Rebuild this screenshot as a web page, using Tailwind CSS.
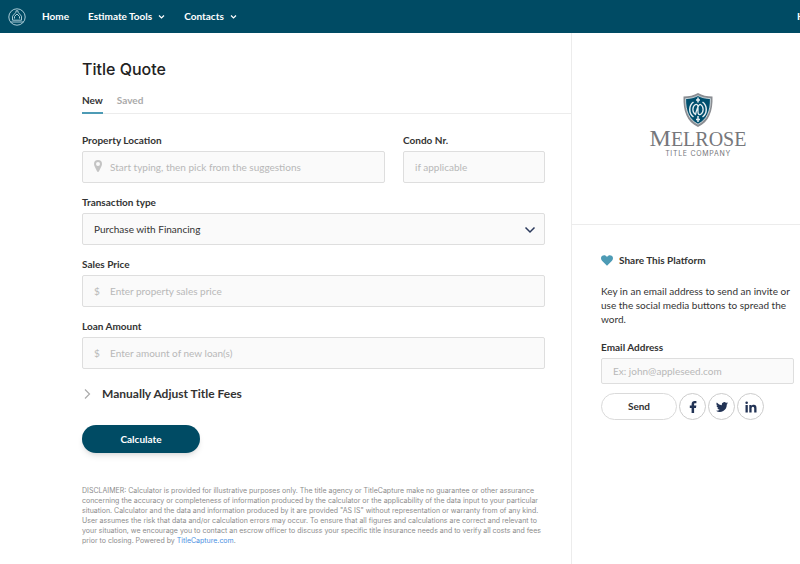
<!DOCTYPE html>
<html lang="en">
<head>
  <meta charset="UTF-8" />
  <meta name="viewport" content="width=device-width, initial-scale=1.0"/>
  <title>Title Quote</title>
  <script src="https://cdn.jsdelivr.net/npm/@tailwindcss/browser@4"></script>
</head>
<body class="flex flex-col min-h-screen overflow-x-hidden bg-white text-[#333] text-[10px] font-['Lato',sans-serif]">
  <header class="flex items-center h-[33px] pl-2 bg-[#004b64] text-white font-bold overflow-hidden">
    <a href="#" aria-label="Dashboard" class="mr-4">
      <svg class="w-[18px] h-[18px]" viewBox="0 0 18 18" fill="none" stroke="#a9cbd6" stroke-width="1">
        <circle cx="9" cy="9" r="8.2"/>
        <path d="M2.500 14h13M4.500 12.200V8.200L8 4.200V2.800h2v1.400l3.500 4v4h-9M6.500 10.500V8.500L9 6l2.500 2.500v2"/>
      </svg>
    </a>
    <nav class="flex items-center flex-1 gap-[19px]">
      <a href="#">Home</a>
      <a href="#" class="flex items-center gap-[6px]">Estimate Tools
        <svg class="w-[7px] h-[7px]" viewBox="0 0 7 7" fill="none" stroke="currentColor" stroke-width="1.2"><path d="M1 2.500l2.500 2.500L6 2.500"/></svg>
      </a>
      <a href="#" class="flex items-center gap-[6px]">Contacts
        <svg class="w-[7px] h-[7px]" viewBox="0 0 7 7" fill="none" stroke="currentColor" stroke-width="1.2"><path d="M1 2.500l2.500 2.500L6 2.500"/></svg>
      </a>
    </nav>
    <a href="#" class="w-[3px]">H</a>
  </header>

  <div class="flex flex-1">
    <main class="flex-1 pl-[82px]">
      <h1 class="mt-6 text-[16px] leading-6 font-medium font-['Inter',sans-serif] text-[#222]">Title Quote</h1>

      <div class="flex gap-[14px] mt-2 h-[25px] border-b border-[#ececec] font-bold">
        <a href="#" class="h-[25px] pt-[3px] leading-4 border-b-2 border-[#4d9bb5]">New</a>
        <a href="#" class="pt-[3px] leading-4 text-[#aaa]">Saved</a>
      </div>

      <form class="pr-[26px] mt-5">
        <div class="flex gap-[18px] mb-[13px]">
          <div class="flex-1">
            <label for="location" class="block mb-[5px] leading-3 font-bold">Property Location</label>
            <div class="flex items-center h-8 pl-[11px] border border-[#dedede] rounded-xs bg-[#fafafa]">
              <svg class="w-2 h-3 mr-2 mb-[2px]" viewBox="0 0 8 12" fill="#c4c4c4"><path fill-rule="evenodd" d="M4 0a4 4 0 0 0-4 4c0 1 .3 1.600.7 2.400L3 11.300c.4.900 1.600.9 2 0l2.300-4.900C7.700 5.600 8 5 8 4a4 4 0 0 0-4-4zm0 2a2 2 0 1 1 0 4 2 2 0 0 1 0-4z"/></svg>
              <input id="location" type="text" placeholder="Start typing, then pick from the suggestions" class="flex-1 min-w-0 outline-none placeholder:text-[#b8b8b8]"/>
            </div>
          </div>
          <div class="w-[142px]">
            <label for="condo" class="block mb-[5px] leading-3 font-bold">Condo Nr.</label>
            <input id="condo" type="text" placeholder="if applicable" class="w-full h-8 px-[11px] border border-[#dedede] rounded-xs bg-[#fafafa] outline-none placeholder:text-[#b8b8b8]"/>
          </div>
        </div>

        <div class="mb-[13px]">
          <label for="type" class="block mb-[5px] leading-3 font-bold">Transaction type</label>
          <div class="relative">
            <select id="type" class="block w-full h-8 px-[11px] border border-[#dedede] rounded-xs bg-[#fafafa] appearance-none">
              <option>Purchase with Financing</option>
            </select>
            <svg class="absolute right-[9px] top-[11px] w-3 h-3 pointer-events-none" viewBox="0 0 12 12" fill="none" stroke="#2b3a5c" stroke-width="1.5"><path d="M1.500 3.500L6 8l4.500-4.500"/></svg>
          </div>
        </div>

        <div class="mb-[13px]">
          <label for="price" class="block mb-[5px] leading-3 font-bold">Sales Price</label>
          <div class="flex items-center h-8 pl-[11px] border border-[#dedede] rounded-xs bg-[#fafafa]">
            <span class="w-4 text-[#b8b8b8]">$</span>
            <input id="price" type="text" placeholder="Enter property sales price" class="flex-1 min-w-0 outline-none placeholder:text-[#b8b8b8]"/>
          </div>
        </div>

        <div class="mb-[13px]">
          <label for="loan" class="block mb-[5px] leading-3 font-bold">Loan Amount</label>
          <div class="flex items-center h-8 pl-[11px] border border-[#dedede] rounded-xs bg-[#fafafa]">
            <span class="w-4 text-[#b8b8b8]">$</span>
            <input id="loan" type="text" placeholder="Enter amount of new loan(s)" class="flex-1 min-w-0 outline-none placeholder:text-[#b8b8b8]"/>
          </div>
        </div>

        <button type="button" class="flex items-center gap-[10px] h-6 text-[12px] font-bold">
          <svg class="w-[10px] h-[10px]" viewBox="0 0 10 10" fill="none" stroke="#aaa" stroke-width="1.2"><path d="M3 .5L7.500 5 3 9.500"/></svg>
          Manually Adjust Title Fees
        </button>

        <button type="submit" class="block mt-[19px] w-[118px] h-7 rounded-full bg-[#004b64] text-white font-bold shadow-md">Calculate</button>
      </form>

      <p class="mt-[33px] text-[7px] leading-[10px] text-[#8c8c8c] font-['Inter',sans-serif]">
        DISCLAIMER: Calculator is provided for illustrative purposes only. The title agency or TitleCapture make no guarantee or other assurance<br/>
        concerning the accuracy or completeness of information produced by the calculator or the applicability of the data input to your particular<br/>
        situation. Calculator and the data and information produced by it are provided "AS IS" without representation or warranty from of any kind.<br/>
        User assumes the risk that data and/or calculation errors may occur. To ensure that all figures and calculations are correct and relevant to<br/>
        your situation, we encourage you to contact an escrow officer to discuss your specific title insurance needs and to verify all costs and fees<br/>
        prior to closing. Powered by <a href="#" class="text-[#4a90e2]">TitleCapture.com</a>.
      </p>
    </main>

    <aside class="w-[229px] border-l border-[#ececec]">
      <div class="flex flex-col items-center h-48 pt-[60px] pl-6 border-b border-[#ececec]">
        <svg class="w-[30px] h-[34px]" viewBox="0 0 30 34" fill="none">
          <path d="M15 0c4 2.500 9 3.500 14.500 3.500C30 18 26 29 15 34 4 29 0 18 .5 3.500 6 3.500 11 2.500 15 0z" fill="#8a8d92"/>
          <path d="M15 2.600c3.600 2 8 2.900 12.400 3C27.600 18 24 26.800 15 31.200 6 26.800 2.400 18 2.600 5.600c4.400-.1 8.800-1 12.400-3z" fill="#004f6e" stroke="#fff" stroke-width=".7"/>
          <path d="M15 4.500v5M13 7h4M15 23v6M13 26.500h4M10.500 9c-5 3.500-5 11.500 0 15M19.500 9c5 3.500 5 11.500 0 15" stroke="#e4edf1" stroke-width="1.500"/>
          <path d="M12.500 21.500c-3.500-2-3.500-8 0-10 3-1 2.500 3 2.500 5s-.5 6 2.500 5c3.500-2 3.500-8 0-10-2.500-1-5 10-5 10z" stroke="#e4edf1" stroke-width="1.300"/>
        </svg>
        <div class="text-[24px] leading-[22px] text-[#76777b] font-['Liberation_Serif',serif]">M<span class="text-[20px]">ELROSE</span></div>
        <div class="text-[7px] leading-2 tracking-widest text-[#76777b] font-['Inter',sans-serif]">TITLE COMPANY</div>
      </div>

      <form class="pl-[29px] pt-[27px] pr-[6px]">
        <h2 class="flex items-center gap-[6px] h-4 font-bold">
          <svg class="w-3 h-[11px]" viewBox="0 0 12 11" fill="#4d9bb5"><path d="M6 10.800L1 5.700C-.5 4-.2 1.600 1.300.700 2.900-.3 5 .2 6 2c1-1.800 3.100-2.300 4.700-1.300C12.200 1.600 12.500 4 11 5.700z"/></svg>
          Share This Platform
        </h2>
        <p class="mt-4 leading-[14px]">Key in an email address to send an invite or<br/>use the social media buttons to spread the<br/>word.</p>
        <label for="email" class="block mt-[15px] mb-[5px] leading-3 font-bold">Email Address</label>
        <input id="email" type="email" placeholder="Ex: john@appleseed.com" class="block w-full h-[26px] px-[11px] border border-[#dedede] rounded-xs bg-[#fafafa] outline-none placeholder:text-[#b8b8b8]"/>
        <div class="flex items-center gap-[2px] mt-[9px]">
          <button type="submit" class="w-[76px] h-[27px] border border-[#dadada] rounded-full font-bold">Send</button>
          <a href="#" aria-label="Facebook" class="flex items-center justify-center w-[27px] h-[27px] border border-[#ccc] rounded-full">
            <svg class="w-3 h-3" viewBox="0 0 12 12" fill="#223355"><path d="M4.600 12V6.900H2.800V4.600h1.800V3C4.600 1.100 5.900 0 7.600 0L9.400.1v2.100H8.200C7.400 2.200 7.100 2.500 7.100 3.200v1.400h2.200L9 6.900H7.100V12z"/></svg>
          </a>
          <a href="#" aria-label="Twitter" class="flex items-center justify-center w-[27px] h-[27px] border border-[#ccc] rounded-full">
            <svg class="w-3 h-3" viewBox="0 0 24 24" fill="#223355"><path d="M24 4.600a10 10 0 0 1-2.800.8 4.900 4.900 0 0 0 2.100-2.700 10 10 0 0 1-3.100 1.200 4.900 4.900 0 0 0-8.400 4.500A14 14 0 0 1 1.700 3.100a4.900 4.900 0 0 0 1.500 6.600 4.900 4.900 0 0 1-2.200-.6v.1a4.900 4.900 0 0 0 3.900 4.800 5 5 0 0 1-2.200.1 4.900 4.900 0 0 0 4.600 3.400A9.900 9.900 0 0 1 0 19.500 14 14 0 0 0 21.500 7.100 10 10 0 0 0 24 4.600z"/></svg>
          </a>
          <a href="#" aria-label="LinkedIn" class="flex items-center justify-center w-[27px] h-[27px] border border-[#ccc] rounded-full">
            <svg class="w-3 h-3" viewBox="0 0 12 12" fill="#223355"><path d="M.5 4h2.300v7.500H.5zM1.650.5a1.300 1.300 0 1 1 0 2.600 1.300 1.300 0 0 1 0-2.600zM4.300 4h2.200v1c.4-.7 1.200-1.200 2.300-1.200 2.200 0 2.700 1.500 2.700 3.500v4.200H9.200V7.800c0-1-.1-2-1.300-2s-1.300 1-1.300 2v3.700H4.300z"/></svg>
          </a>
        </div>
      </form>
    </aside>
  </div>
</body>
</html>
